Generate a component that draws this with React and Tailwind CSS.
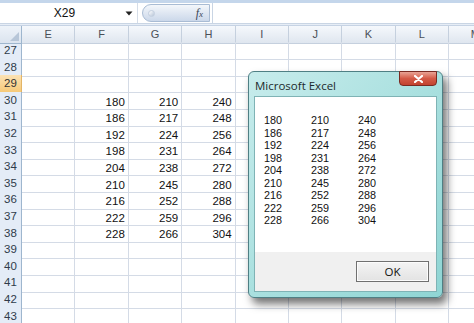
const columns = ["E", "F", "G", "H", "I", "J", "K", "L", "M"];
const rowNumbers = [27, 28, 29, 30, 31, 32, 33, 34, 35, 36, 37, 38, 39, 40, 41, 42, 43];

const values = {
  30: [180, 210, 240],
  31: [186, 217, 248],
  32: [192, 224, 256],
  33: [198, 231, 264],
  34: [204, 238, 272],
  35: [210, 245, 280],
  36: [216, 252, 288],
  37: [222, 259, 296],
  38: [228, 266, 304],
};

const gridCols = "grid grid-cols-[22px_repeat(9,53.4px)]";

function FormulaBar() {
  return (
    <>
      <div className="h-[3px] bg-[#c4d6eb]" />
      <div className="flex h-[21px] bg-white border-b border-[#c9d5e4]">
        <div className="w-[138px] flex items-center border-r border-[#d5dde8]">
          <span className="flex-1 text-center text-[12px] text-[#111] pl-[4px]">X29</span>
          <svg width="8" height="5" viewBox="0 0 8 5" className="mr-[4px]">
            <path d="M0.5 0.5 L7.5 0.5 L4 4.5 Z" fill="#222" />
          </svg>
        </div>
        <div className="w-[4px]" />
        <div className="w-[68px] my-[1px] rounded-l-full rounded-r-[3px] border border-[#a9bcd4] bg-gradient-to-b from-[#f4f7fb] via-[#dfe7f2] to-[#cbd8ea] flex items-center justify-between pl-[5px] pr-[6px]">
          <span className="w-[7px] h-[7px] rounded-full bg-gradient-to-br from-white to-[#b7c5d8] border border-[#c3cfdf]" />
          <span className="italic text-[12px] font-['Liberation_Serif',serif] text-[#3a4657]">
            f<span className="text-[9px]">x</span>
          </span>
        </div>
        <div className="flex-1 border-l border-[#c9d5e4] ml-[2px]" />
      </div>
      <div className="h-[1px] bg-[#e6edf6]" />
      <div className="h-[1px] bg-[#c6d3e4]" />
    </>
  );
}

function HeaderRow() {
  return (
    <div className={`${gridCols} h-[16px]`}>
      <div className="relative bg-gradient-to-b from-[#eef3f9] to-[#dbe4ef] border-r border-b border-[#9eb6ce]">
        <svg width="9" height="9" viewBox="0 0 9 9" className="absolute right-[2px] bottom-[2px]">
          <path d="M9 0 L9 9 L0 9 Z" fill="#b7c6d8" />
        </svg>
      </div>
      {columns.map((c) => (
        <div
          key={c}
          className="flex items-center justify-center bg-gradient-to-b from-[#f5f8fc] to-[#dfe6ef] border-r border-b border-[#c5d0de] text-[11px] text-[#4a4f57]"
        >
          {c}
        </div>
      ))}
    </div>
  );
}

function SheetRow({ n }) {
  const active = n === 29;
  const v = values[n];
  return (
    <div className={`${gridCols} h-[16.6px]`}>
      <div
        className={`flex items-center justify-center border-r border-b text-[11.5px] ${
          active
            ? "bg-gradient-to-b from-[#fbe2b4] to-[#f6c978] border-[#e3b566] text-[#333]"
            : "bg-[#e4ecf7] border-[#9eb6ce] text-[#2f3b4a]"
        }`}
      >
        {n}
      </div>
      {columns.map((c, i) => {
        const val = v && i >= 1 && i <= 3 ? v[i - 1] : "";
        return (
          <div
            key={c}
            className="flex items-end justify-end pr-[3px] pb-[1px] border-r border-b border-[#d4dbe6] text-[11.5px] text-[#111] leading-none"
          >
            {val}
          </div>
        );
      })}
    </div>
  );
}

function MessageBox() {
  const lines = Object.values(values);
  return (
    <div className="absolute left-[248px] top-[71px] w-[195px] h-[227px] rounded-[6px] border border-[#4f7f84] bg-gradient-to-br from-[#c7ecec] via-[#a9e0df] to-[#8fd5d4] shadow-[4px_6px_9px_rgba(0,0,0,0.55)] flex flex-col px-[5px] pb-[5px] font-['Open_Sans',sans-serif]">
      <div className="h-[24px] flex items-start justify-between">
        <span className="mt-[5px] ml-[1px] text-[11.5px] text-[#1c2a2c]">Microsoft Excel</span>
        <div className="w-[38px] h-[15px] -mt-[1px] rounded-b-[4px] border border-[#7a2a22] bg-gradient-to-b from-[#e8a395] via-[#d45a47] to-[#c2432f] flex items-center justify-center">
          <svg width="9" height="8" viewBox="0 0 9 8">
            <path d="M1 1 L8 7 M8 1 L1 7" stroke="#fff" strokeWidth="2.2" strokeLinecap="round" />
          </svg>
        </div>
      </div>
      <div className="flex-1 flex flex-col border border-[#7fb3b5] bg-white">
        <div className="flex-1 pt-[17px] pl-[9px] text-[10.8px] leading-[12.5px] text-[#111] font-['Liberation_Sans',sans-serif]">
          {lines.map((r, i) => (
            <div key={i} className="flex">
              <span className="w-[47px]">{r[0]}</span>
              <span className="w-[47px]">{r[1]}</span>
              <span>{r[2]}</span>
            </div>
          ))}
        </div>
        <div className="h-[39px] bg-[#f0f0f0] flex items-start justify-end pt-[9px] pr-[7px]">
          <div className="w-[73px] h-[21px] border border-[#707070] bg-gradient-to-b from-[#f4f4f4] to-[#e3e3e3] shadow-[inset_0_0_0_1px_#fcfcfc] flex items-center justify-center text-[11.5px] text-[#111]">
            OK
          </div>
        </div>
      </div>
    </div>
  );
}

export default function App() {
  return (
    <div className="relative w-[474px] h-[323px] overflow-hidden bg-white font-['Liberation_Sans',sans-serif]">
      <FormulaBar />
      <HeaderRow />
      {rowNumbers.map((n) => (
        <SheetRow key={n} n={n} />
      ))}
      <MessageBox />
    </div>
  );
}
